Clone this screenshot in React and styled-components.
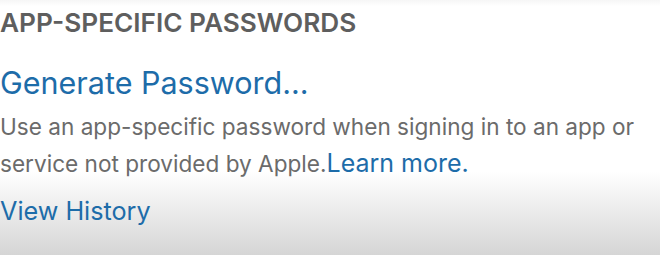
import React from "react";
import styled, { createGlobalStyle } from "styled-components";

const GlobalStyle = createGlobalStyle`
  html, body {
    margin: 0;
    padding: 0;
  }
  body {
    font-family: Inter, "Liberation Sans", Arial, sans-serif;
    background: #ffffff;
  }
`;

const Panel = styled.section`
  width: 660px;
  height: 255px;
  box-sizing: border-box;
  padding: 6px 0 0 0;
  display: flex;
  flex-direction: column;
  overflow: hidden;
  background: linear-gradient(
    to bottom,
    #f6f6f6 0px,
    #ffffff 6px,
    #ffffff 172px,
    #ececec 210px,
    #d5d5d5 255px
  );
`;

const Heading = styled.h2`
  margin: 0;
  font-size: 26.2px;
  line-height: 34px;
  font-weight: 600;
  color: #5e5e5e;
`;

const Link = styled.a`
  display: block;
  color: #1d6ca9;
  text-decoration: none;
  font-size: ${(p) => p.$size}px;
  line-height: ${(p) => p.$lh}px;
  margin-top: ${(p) => p.$top}px;
  cursor: pointer;
`;

const InlineLink = styled.a`
  color: #1d6ca9;
  text-decoration: none;
  font-size: 25px;
  cursor: pointer;
`;

const Body = styled.p`
  margin: 5px 0 0 0;
  font-size: 22.6px;
  line-height: 37px;
  color: #6b6b6b;
`;

export default function App() {
  return (
    <>
      <GlobalStyle />
      <Panel>
        <Heading>APP-SPECIFIC PASSWORDS</Heading>
        <Link $size={30.5} $lh={40} $top={23}>
          Generate Password...
        </Link>
        <Body>
          Use an app-specific password when signing in to an app or
          <br />
          service not provided by Apple.
          <InlineLink>Learn more.</InlineLink>
        </Body>
        <Link $size={25.2} $lh={36} $top={11}>
          View History
        </Link>
      </Panel>
    </>
  );
}
